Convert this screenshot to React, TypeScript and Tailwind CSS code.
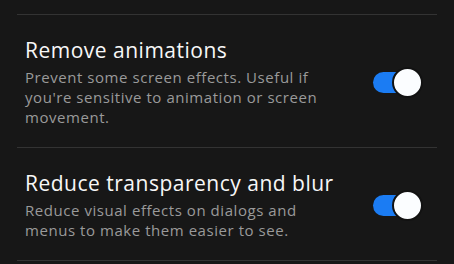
const settings = [
  {
    title: "Remove animations",
    description: "Prevent some screen effects. Useful if you're sensitive to animation or screen movement.",
  },
  {
    title: "Reduce transparency and blur",
    description: "Reduce visual effects on dialogs and menus to make them easier to see.",
  },
];

function Toggle() {
  return (
    <div className="relative h-[31px] w-[50px] flex-none">
      <div className="absolute left-0 top-[5px] h-[21px] w-[42px] rounded-full bg-[#1b7cf3]" />
      <div className="absolute right-0 top-0 h-[31px] w-[31px] rounded-full border-2 border-[#121212] bg-[#fbfdff]" />
    </div>
  );
}

export default function App() {
  return (
    <div
      className="h-[264px] w-[454px] overflow-hidden bg-[#171717] px-[17px] pt-[14px]"
      style={{ fontFamily: "'Open Sans', Roboto, sans-serif" }}
    >
      <div className="h-px bg-[#333333]" />
      {settings.map((item) => (
        <div key={item.title}>
          <div className="flex items-center justify-between pl-2 pr-[14px] pt-[22px] pb-[20px]">
            <div className="w-[304px]">
              <p className="whitespace-nowrap text-[21px] leading-[26px] tracking-[0.5px] text-[#f7f7f7]">
                {item.title}
              </p>
              <p className="mt-1 text-[15px] leading-5 tracking-[0.55px] text-[#9a9a9a]">{item.description}</p>
            </div>
            <Toggle />
          </div>
          <div className="h-px bg-[#333333]" />
        </div>
      ))}
    </div>
  );
}
